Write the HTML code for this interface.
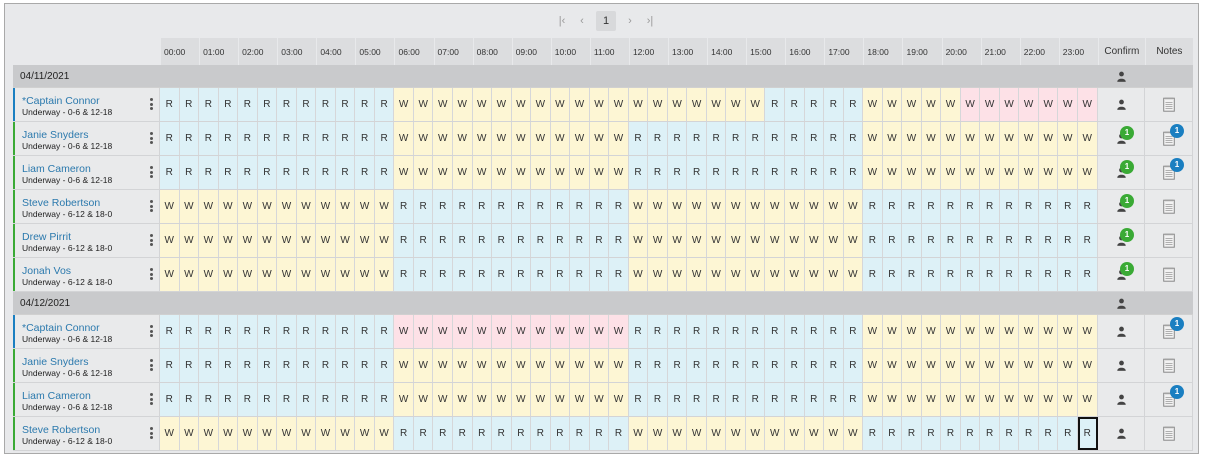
<!DOCTYPE html>
<html><head><meta charset="utf-8"><style>
*{box-sizing:border-box;margin:0;padding:0}
body{width:1207px;height:459px;background:#fff;font-family:"Liberation Sans",Arial,sans-serif;overflow:hidden;position:relative}
.outer{position:absolute;left:4px;top:3px;width:1195px;height:451px;background:#e8e9eb;border:1px solid #a9a9a9}
.pag{position:absolute;left:552px;top:11px;height:20px;display:flex;align-items:center;font-size:11px;color:#999}
.pag span{width:20px;text-align:center}
.pag .cur{background:#d8d9db;color:#333;border-radius:2px;height:20px;line-height:20px;width:20px;margin:0 4px}
.tbl{position:absolute;left:13px;top:38px;width:1180px}
.hdr{display:flex;height:27px}
.hdr .nm{width:147px}
.hdr .h{width:39.083px;background:#dcdddf;border-left:1px solid #e8e9eb;font-size:8.5px;color:#333;padding:9px 0 0 3px}
.hdr .cf,.hdr .nt{background:#dcdddf;font-size:10px;color:#333;text-align:center;padding-top:8px;border-left:1px solid #e8e9eb}
.cf{width:47px}.nt{width:48px}
.date{display:flex;height:23px;background:#c9cacc;font-size:10px;color:#222;border-bottom:1px solid #d0d0d0}
.date .d{width:1085px;padding:6px 0 0 7px}
.date .cf{display:flex;justify-content:center;align-items:center}
.row{display:flex;height:34px;border-bottom:1px solid #d3d4d6}
.name{width:147px;background:#e9eaeb;border-left:2px solid #3aaa35;position:relative;padding:7px 0 0 7px;border-right:1px solid #d3d4d6}
.name.cap{border-left-color:#1a7fc1}
.name b{display:block;font-weight:normal;font-size:10.5px;color:#2b79ad;line-height:12px}
.name small{display:block;font-size:8.5px;color:#222;line-height:11px}
.keb{position:absolute;left:135px;top:10px;width:3px}
.keb i{display:block;width:3px;height:3px;border-radius:50%;background:#555;margin-bottom:1.5px}
.cells{display:flex;width:938px}
.cells i{font-style:normal;width:19.5417px;border-right:1px solid #d6d7d9;font-size:10px;color:#333;text-align:center;line-height:33px}
.b{background:#ddf1f7}.y{background:#fdf6d4}.p{background:#fde1e7}
.cells i.sel{outline:2px solid #111;outline-offset:-2px}
.ic{background:#e9eaeb;border-right:1px solid #d3d4d6;display:flex;justify-content:center;align-items:center;position:relative}
.bd{position:absolute;width:14px;height:14px;border-radius:50%;color:#fff;font-size:8px;font-weight:bold;text-align:center;line-height:14px}
.g{background:#3aaa35;left:22px;top:4px}
.bl{background:#1a7fc1;left:25px;top:2px}
</style></head><body>
<div class="outer"></div>
<div class="pag"><span>|&lsaquo;</span><span>&lsaquo;</span><span class="cur">1</span><span>&rsaquo;</span><span>&rsaquo;|</span></div>
<svg width="0" height="0" style="position:absolute"><defs>
<symbol id="pr" viewBox="0 0 12 12"><circle cx="6" cy="3.3" r="2.6" fill="#444"/><path d="M1.5 11.5 C1.5 7.5 10.5 7.5 10.5 11.5Z" fill="#444"/><rect x="1.5" y="10.8" width="9" height="1" fill="#444"/></symbol>
<symbol id="nt" viewBox="0 0 12 15"><rect x="0.7" y="1.2" width="10.6" height="13" fill="#f2f2f2" stroke="#888" stroke-width="1"/><path d="M3 0.5v2M5 0.5v2M7 0.5v2M9 0.5v2M2.5 5.5h7M2.5 7.5h7M2.5 9.5h7M2.5 11.5h7" stroke="#999" stroke-width="0.8"/></symbol>
</defs></svg>
<div class="tbl">
<div class="hdr"><div class="nm"></div><div class="h">00:00</div><div class="h">01:00</div><div class="h">02:00</div><div class="h">03:00</div><div class="h">04:00</div><div class="h">05:00</div><div class="h">06:00</div><div class="h">07:00</div><div class="h">08:00</div><div class="h">09:00</div><div class="h">10:00</div><div class="h">11:00</div><div class="h">12:00</div><div class="h">13:00</div><div class="h">14:00</div><div class="h">15:00</div><div class="h">16:00</div><div class="h">17:00</div><div class="h">18:00</div><div class="h">19:00</div><div class="h">20:00</div><div class="h">21:00</div><div class="h">22:00</div><div class="h">23:00</div><div class="cf">Confirm</div><div class="nt">Notes</div></div>

<div class="date"><div class="d">04/11/2021</div><div class="cf"><svg width="11" height="11"><use href="#pr"/></svg></div></div>

<div class="row"><div class="name cap"><b>*Captain Connor</b><small>Underway - 0-6 &amp; 12-18</small><div class="keb"><i></i><i></i><i></i></div></div><div class="cells"><i class=b>R</i><i class=b>R</i><i class=b>R</i><i class=b>R</i><i class=b>R</i><i class=b>R</i><i class=b>R</i><i class=b>R</i><i class=b>R</i><i class=b>R</i><i class=b>R</i><i class=b>R</i><i class=y>W</i><i class=y>W</i><i class=y>W</i><i class=y>W</i><i class=y>W</i><i class=y>W</i><i class=y>W</i><i class=y>W</i><i class=y>W</i><i class=y>W</i><i class=y>W</i><i class=y>W</i><i class=y>W</i><i class=y>W</i><i class=y>W</i><i class=y>W</i><i class=y>W</i><i class=y>W</i><i class=y>W</i><i class=b>R</i><i class=b>R</i><i class=b>R</i><i class=b>R</i><i class=b>R</i><i class=y>W</i><i class=y>W</i><i class=y>W</i><i class=y>W</i><i class=y>W</i><i class=p>W</i><i class=p>W</i><i class=p>W</i><i class=p>W</i><i class=p>W</i><i class=p>W</i><i class=p>W</i></div><div class="ic cf"><svg width="11" height="11"><use href="#pr"/></svg></div><div class="ic nt"><svg width="12" height="15"><use href="#nt"/></svg></div></div>

<div class="row"><div class="name"><b>Janie Snyders</b><small>Underway - 0-6 &amp; 12-18</small><div class="keb"><i></i><i></i><i></i></div></div><div class="cells"><i class=b>R</i><i class=b>R</i><i class=b>R</i><i class=b>R</i><i class=b>R</i><i class=b>R</i><i class=b>R</i><i class=b>R</i><i class=b>R</i><i class=b>R</i><i class=b>R</i><i class=b>R</i><i class=y>W</i><i class=y>W</i><i class=y>W</i><i class=y>W</i><i class=y>W</i><i class=y>W</i><i class=y>W</i><i class=y>W</i><i class=y>W</i><i class=y>W</i><i class=y>W</i><i class=y>W</i><i class=b>R</i><i class=b>R</i><i class=b>R</i><i class=b>R</i><i class=b>R</i><i class=b>R</i><i class=b>R</i><i class=b>R</i><i class=b>R</i><i class=b>R</i><i class=b>R</i><i class=b>R</i><i class=y>W</i><i class=y>W</i><i class=y>W</i><i class=y>W</i><i class=y>W</i><i class=y>W</i><i class=y>W</i><i class=y>W</i><i class=y>W</i><i class=y>W</i><i class=y>W</i><i class=y>W</i></div><div class="ic cf"><svg width="11" height="11"><use href="#pr"/></svg><span class="bd g">1</span></div><div class="ic nt"><svg width="12" height="15"><use href="#nt"/></svg><span class="bd bl">1</span></div></div>

<div class="row"><div class="name"><b>Liam Cameron</b><small>Underway - 0-6 &amp; 12-18</small><div class="keb"><i></i><i></i><i></i></div></div><div class="cells"><i class=b>R</i><i class=b>R</i><i class=b>R</i><i class=b>R</i><i class=b>R</i><i class=b>R</i><i class=b>R</i><i class=b>R</i><i class=b>R</i><i class=b>R</i><i class=b>R</i><i class=b>R</i><i class=y>W</i><i class=y>W</i><i class=y>W</i><i class=y>W</i><i class=y>W</i><i class=y>W</i><i class=y>W</i><i class=y>W</i><i class=y>W</i><i class=y>W</i><i class=y>W</i><i class=y>W</i><i class=b>R</i><i class=b>R</i><i class=b>R</i><i class=b>R</i><i class=b>R</i><i class=b>R</i><i class=b>R</i><i class=b>R</i><i class=b>R</i><i class=b>R</i><i class=b>R</i><i class=b>R</i><i class=y>W</i><i class=y>W</i><i class=y>W</i><i class=y>W</i><i class=y>W</i><i class=y>W</i><i class=y>W</i><i class=y>W</i><i class=y>W</i><i class=y>W</i><i class=y>W</i><i class=y>W</i></div><div class="ic cf"><svg width="11" height="11"><use href="#pr"/></svg><span class="bd g">1</span></div><div class="ic nt"><svg width="12" height="15"><use href="#nt"/></svg><span class="bd bl">1</span></div></div>

<div class="row"><div class="name"><b>Steve Robertson</b><small>Underway - 6-12 &amp; 18-0</small><div class="keb"><i></i><i></i><i></i></div></div><div class="cells"><i class=y>W</i><i class=y>W</i><i class=y>W</i><i class=y>W</i><i class=y>W</i><i class=y>W</i><i class=y>W</i><i class=y>W</i><i class=y>W</i><i class=y>W</i><i class=y>W</i><i class=y>W</i><i class=b>R</i><i class=b>R</i><i class=b>R</i><i class=b>R</i><i class=b>R</i><i class=b>R</i><i class=b>R</i><i class=b>R</i><i class=b>R</i><i class=b>R</i><i class=b>R</i><i class=b>R</i><i class=y>W</i><i class=y>W</i><i class=y>W</i><i class=y>W</i><i class=y>W</i><i class=y>W</i><i class=y>W</i><i class=y>W</i><i class=y>W</i><i class=y>W</i><i class=y>W</i><i class=y>W</i><i class=b>R</i><i class=b>R</i><i class=b>R</i><i class=b>R</i><i class=b>R</i><i class=b>R</i><i class=b>R</i><i class=b>R</i><i class=b>R</i><i class=b>R</i><i class=b>R</i><i class=b>R</i></div><div class="ic cf"><svg width="11" height="11"><use href="#pr"/></svg><span class="bd g">1</span></div><div class="ic nt"><svg width="12" height="15"><use href="#nt"/></svg></div></div>

<div class="row"><div class="name"><b>Drew Pirrit</b><small>Underway - 6-12 &amp; 18-0</small><div class="keb"><i></i><i></i><i></i></div></div><div class="cells"><i class=y>W</i><i class=y>W</i><i class=y>W</i><i class=y>W</i><i class=y>W</i><i class=y>W</i><i class=y>W</i><i class=y>W</i><i class=y>W</i><i class=y>W</i><i class=y>W</i><i class=y>W</i><i class=b>R</i><i class=b>R</i><i class=b>R</i><i class=b>R</i><i class=b>R</i><i class=b>R</i><i class=b>R</i><i class=b>R</i><i class=b>R</i><i class=b>R</i><i class=b>R</i><i class=b>R</i><i class=y>W</i><i class=y>W</i><i class=y>W</i><i class=y>W</i><i class=y>W</i><i class=y>W</i><i class=y>W</i><i class=y>W</i><i class=y>W</i><i class=y>W</i><i class=y>W</i><i class=y>W</i><i class=b>R</i><i class=b>R</i><i class=b>R</i><i class=b>R</i><i class=b>R</i><i class=b>R</i><i class=b>R</i><i class=b>R</i><i class=b>R</i><i class=b>R</i><i class=b>R</i><i class=b>R</i></div><div class="ic cf"><svg width="11" height="11"><use href="#pr"/></svg><span class="bd g">1</span></div><div class="ic nt"><svg width="12" height="15"><use href="#nt"/></svg></div></div>

<div class="row"><div class="name"><b>Jonah Vos</b><small>Underway - 6-12 &amp; 18-0</small><div class="keb"><i></i><i></i><i></i></div></div><div class="cells"><i class=y>W</i><i class=y>W</i><i class=y>W</i><i class=y>W</i><i class=y>W</i><i class=y>W</i><i class=y>W</i><i class=y>W</i><i class=y>W</i><i class=y>W</i><i class=y>W</i><i class=y>W</i><i class=b>R</i><i class=b>R</i><i class=b>R</i><i class=b>R</i><i class=b>R</i><i class=b>R</i><i class=b>R</i><i class=b>R</i><i class=b>R</i><i class=b>R</i><i class=b>R</i><i class=b>R</i><i class=y>W</i><i class=y>W</i><i class=y>W</i><i class=y>W</i><i class=y>W</i><i class=y>W</i><i class=y>W</i><i class=y>W</i><i class=y>W</i><i class=y>W</i><i class=y>W</i><i class=y>W</i><i class=b>R</i><i class=b>R</i><i class=b>R</i><i class=b>R</i><i class=b>R</i><i class=b>R</i><i class=b>R</i><i class=b>R</i><i class=b>R</i><i class=b>R</i><i class=b>R</i><i class=b>R</i></div><div class="ic cf"><svg width="11" height="11"><use href="#pr"/></svg><span class="bd g">1</span></div><div class="ic nt"><svg width="12" height="15"><use href="#nt"/></svg></div></div>

<div class="date"><div class="d">04/12/2021</div><div class="cf"><svg width="11" height="11"><use href="#pr"/></svg></div></div>

<div class="row"><div class="name cap"><b>*Captain Connor</b><small>Underway - 0-6 &amp; 12-18</small><div class="keb"><i></i><i></i><i></i></div></div><div class="cells"><i class=b>R</i><i class=b>R</i><i class=b>R</i><i class=b>R</i><i class=b>R</i><i class=b>R</i><i class=b>R</i><i class=b>R</i><i class=b>R</i><i class=b>R</i><i class=b>R</i><i class=b>R</i><i class=p>W</i><i class=p>W</i><i class=p>W</i><i class=p>W</i><i class=p>W</i><i class=p>W</i><i class=p>W</i><i class=p>W</i><i class=p>W</i><i class=p>W</i><i class=p>W</i><i class=p>W</i><i class=b>R</i><i class=b>R</i><i class=b>R</i><i class=b>R</i><i class=b>R</i><i class=b>R</i><i class=b>R</i><i class=b>R</i><i class=b>R</i><i class=b>R</i><i class=b>R</i><i class=b>R</i><i class=y>W</i><i class=y>W</i><i class=y>W</i><i class=y>W</i><i class=y>W</i><i class=y>W</i><i class=y>W</i><i class=y>W</i><i class=y>W</i><i class=y>W</i><i class=y>W</i><i class=y>W</i></div><div class="ic cf"><svg width="11" height="11"><use href="#pr"/></svg></div><div class="ic nt"><svg width="12" height="15"><use href="#nt"/></svg><span class="bd bl">1</span></div></div>

<div class="row"><div class="name"><b>Janie Snyders</b><small>Underway - 0-6 &amp; 12-18</small><div class="keb"><i></i><i></i><i></i></div></div><div class="cells"><i class=b>R</i><i class=b>R</i><i class=b>R</i><i class=b>R</i><i class=b>R</i><i class=b>R</i><i class=b>R</i><i class=b>R</i><i class=b>R</i><i class=b>R</i><i class=b>R</i><i class=b>R</i><i class=y>W</i><i class=y>W</i><i class=y>W</i><i class=y>W</i><i class=y>W</i><i class=y>W</i><i class=y>W</i><i class=y>W</i><i class=y>W</i><i class=y>W</i><i class=y>W</i><i class=y>W</i><i class=b>R</i><i class=b>R</i><i class=b>R</i><i class=b>R</i><i class=b>R</i><i class=b>R</i><i class=b>R</i><i class=b>R</i><i class=b>R</i><i class=b>R</i><i class=b>R</i><i class=b>R</i><i class=y>W</i><i class=y>W</i><i class=y>W</i><i class=y>W</i><i class=y>W</i><i class=y>W</i><i class=y>W</i><i class=y>W</i><i class=y>W</i><i class=y>W</i><i class=y>W</i><i class=y>W</i></div><div class="ic cf"><svg width="11" height="11"><use href="#pr"/></svg></div><div class="ic nt"><svg width="12" height="15"><use href="#nt"/></svg></div></div>

<div class="row"><div class="name"><b>Liam Cameron</b><small>Underway - 0-6 &amp; 12-18</small><div class="keb"><i></i><i></i><i></i></div></div><div class="cells"><i class=b>R</i><i class=b>R</i><i class=b>R</i><i class=b>R</i><i class=b>R</i><i class=b>R</i><i class=b>R</i><i class=b>R</i><i class=b>R</i><i class=b>R</i><i class=b>R</i><i class=b>R</i><i class=y>W</i><i class=y>W</i><i class=y>W</i><i class=y>W</i><i class=y>W</i><i class=y>W</i><i class=y>W</i><i class=y>W</i><i class=y>W</i><i class=y>W</i><i class=y>W</i><i class=y>W</i><i class=b>R</i><i class=b>R</i><i class=b>R</i><i class=b>R</i><i class=b>R</i><i class=b>R</i><i class=b>R</i><i class=b>R</i><i class=b>R</i><i class=b>R</i><i class=b>R</i><i class=b>R</i><i class=y>W</i><i class=y>W</i><i class=y>W</i><i class=y>W</i><i class=y>W</i><i class=y>W</i><i class=y>W</i><i class=y>W</i><i class=y>W</i><i class=y>W</i><i class=y>W</i><i class=y>W</i></div><div class="ic cf"><svg width="11" height="11"><use href="#pr"/></svg></div><div class="ic nt"><svg width="12" height="15"><use href="#nt"/></svg><span class="bd bl">1</span></div></div>

<div class="row"><div class="name"><b>Steve Robertson</b><small>Underway - 6-12 &amp; 18-0</small><div class="keb"><i></i><i></i><i></i></div></div><div class="cells"><i class=y>W</i><i class=y>W</i><i class=y>W</i><i class=y>W</i><i class=y>W</i><i class=y>W</i><i class=y>W</i><i class=y>W</i><i class=y>W</i><i class=y>W</i><i class=y>W</i><i class=y>W</i><i class=b>R</i><i class=b>R</i><i class=b>R</i><i class=b>R</i><i class=b>R</i><i class=b>R</i><i class=b>R</i><i class=b>R</i><i class=b>R</i><i class=b>R</i><i class=b>R</i><i class=b>R</i><i class=y>W</i><i class=y>W</i><i class=y>W</i><i class=y>W</i><i class=y>W</i><i class=y>W</i><i class=y>W</i><i class=y>W</i><i class=y>W</i><i class=y>W</i><i class=y>W</i><i class=y>W</i><i class=b>R</i><i class=b>R</i><i class=b>R</i><i class=b>R</i><i class=b>R</i><i class=b>R</i><i class=b>R</i><i class=b>R</i><i class=b>R</i><i class=b>R</i><i class=b>R</i><i class="b sel">R</i></div><div class="ic cf"><svg width="11" height="11"><use href="#pr"/></svg></div><div class="ic nt"><svg width="12" height="15"><use href="#nt"/></svg></div></div>
</div>
</body></html>
